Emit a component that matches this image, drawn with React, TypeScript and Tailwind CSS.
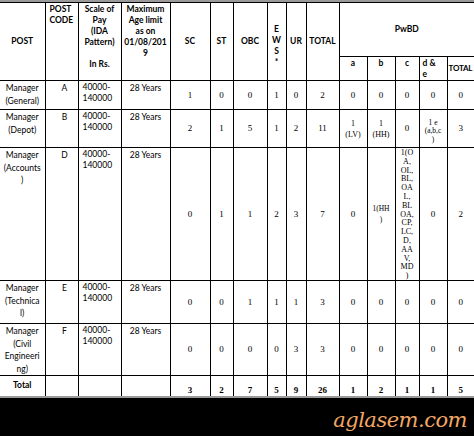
import React from 'react';

const sans = "font-['Lato','Liberation_Sans',sans-serif]";
const serif = "font-['Liberation_Serif','Times_New_Roman',serif]";

type Row = {
  post: React.ReactNode;
  code: string;
  h: string;
  nums: React.ReactNode[];
};

const rows: Row[] = [
  {
    post: <>Manager<br />(General)</>,
    code: 'A',
    h: 'h-[29px]',
    nums: ['1', '0', '0', '1', '0', '2', '0', '0', '0', '0', '0'],
  },
  {
    post: <>Manager<br />(Depot)</>,
    code: 'B',
    h: 'h-[38px]',
    nums: [
      '2', '1', '5', '1', '2', '11',
      <span className="text-[8px] leading-[10px]">1<br />(LV)</span>,
      <span className="text-[8px] leading-[10px]">1<br />(HH)</span>,
      '0',
      <span className="text-[7.5px] leading-[8.5px] block pt-[6px]">1 e<br />(a,b,c<br />)</span>,
      '3',
    ],
  },
  {
    post: <>Manager<br />(Accounts<br />)</>,
    code: 'D',
    h: 'h-[133px]',
    nums: [
      '0', '1', '1', '2', '3', '7', '0',
      <span className="text-[7.5px] leading-[10px]">1(HH<br />)</span>,
      <span className="block text-[8px] leading-[8.8px] -mb-[2px]">
        1(O<br />A,<br />OL,<br />BL,<br />OA<br />L,<br />BL<br />OA,<br />CP,<br />LC,<br />D,<br />AA<br />V,<br />MD<br />)
      </span>,
      '0',
      '2',
    ],
  },
  {
    post: <>Manager<br />(Technica<br />l)</>,
    code: 'E',
    h: 'h-[43px]',
    nums: ['0', '0', '1', '1', '1', '3', '0', '0', '0', '0', '0'],
  },
  {
    post: <>Manager<br />(Civil<br />Engineeri<br />ng)</>,
    code: 'F',
    h: 'h-[51px]',
    nums: ['0', '0', '0', '0', '3', '3', '0', '0', '0', '0', '0'],
  },
];

const totals = ['3', '2', '7', '5', '9', '26', '1', '2', '1', '1', '5'];

const widths = [45, 33, 43, 49, 40, 23, 34, 19, 20, 33, 28, 28, 24, 28, 27];

export default function App() {
  const th = `border border-black font-bold text-[8.5px] leading-[11px] text-black ${sans}`;
  const td = 'border border-black text-black';

  return (
    <div className="w-[474px] h-[436px] bg-black flex flex-col overflow-hidden">
      <div className="bg-white border-t-2 border-[#9a9a9a]">
        <table className="table-fixed border-collapse w-[474px]">
          <colgroup>
            {widths.map((w, i) => (
              <col key={i} style={{ width: w }} />
            ))}
          </colgroup>
          <thead>
            <tr className="h-[54px]">
              <th rowSpan={2} className={`${th} border-l-0 align-middle text-center`}>POST</th>
              <th rowSpan={2} className={`${th} align-top text-left pl-[4px] pt-[1px]`}>POST<br />CODE</th>
              <th rowSpan={2} className={`${th} align-top text-center pt-[1px]`}>
                Scale of<br />Pay<br />(IDA<br />Pattern)<br /><br />In Rs.
              </th>
              <th rowSpan={2} className={`${th} align-top text-center pt-[1px]`}>
                Maximum<br />Age limit<br />as on<br />01/08/201<br />9
              </th>
              <th rowSpan={2} className={`${th} align-middle text-center`}>SC</th>
              <th rowSpan={2} className={`${th} align-middle text-center`}>ST</th>
              <th rowSpan={2} className={`${th} align-middle text-center`}>OBC</th>
              <th rowSpan={2} className={`${th} align-middle text-center leading-[8.5px] pt-[8px]`}>
                E<br />W<br />S<br />*
              </th>
              <th rowSpan={2} className={`${th} align-middle text-center`}>UR</th>
              <th rowSpan={2} className={`${th} align-middle text-center`}>TOTAL</th>
              <th colSpan={5} className={`${th} border-r-0 align-middle text-center`}>PwBD</th>
            </tr>
            <tr className="h-[22px]">
              <th className={`${th} align-top text-center pt-[1px]`}>a</th>
              <th className={`${th} align-top text-center pt-[1px]`}>b</th>
              <th className={`${th} align-top text-center pt-[1px]`}>c</th>
              <th className={`${th} align-top text-left pl-[3px] pt-[1px] leading-[10px]`}>d &amp;<br />e</th>
              <th className={`${th} border-r-0 align-middle text-left pl-[1px] text-[8px] tracking-[-0.2px] whitespace-nowrap`}>TOTAL</th>
            </tr>
          </thead>
          <tbody>
            {rows.map((r) => (
              <tr key={r.code} className={r.h}>
                <td className={`${td} border-l-0 align-top text-center pt-[1px] text-[8.5px] leading-[12.5px] ${sans}`}>{r.post}</td>
                <td className={`${td} align-top text-center pl-[6px] pt-[1px] text-[8.5px] leading-[12.5px] ${sans}`}>{r.code}</td>
                <td className={`${td} align-top text-left pl-[4px] pt-[1px] text-[8.5px] leading-[11px] ${sans}`}>40000-<br />140000</td>
                <td className={`${td} align-top text-center pt-[1px] text-[8.5px] leading-[12.5px] ${sans}`}>28 Years</td>
                {r.nums.map((n, i) => (
                  <td
                    key={i}
                    className={`${td} ${i === r.nums.length - 1 ? 'border-r-0' : ''} align-middle text-center text-[9px] leading-[11px] ${serif}`}
                  >
                    {n}
                  </td>
                ))}
              </tr>
            ))}
            <tr className="h-[21px]">
              <td className={`${td} border-l-0 border-b-2 border-b-[#9a9a9a] align-middle text-center font-bold text-[8.5px] ${sans}`}>Total</td>
              <td className={`${td} border-b-2 border-b-[#9a9a9a]`}></td>
              <td className={`${td} border-b-2 border-b-[#9a9a9a]`}></td>
              <td className={`${td} border-b-2 border-b-[#9a9a9a]`}></td>
              {totals.map((t, i) => (
                <td
                  key={i}
                  className={`${td} ${i === totals.length - 1 ? 'border-r-0' : ''} border-b-2 border-b-[#9a9a9a] align-bottom text-center font-bold text-[9px] leading-[12px] ${serif}`}
                >
                  {t}
                </td>
              ))}
            </tr>
          </tbody>
        </table>
      </div>
      <div className="flex-1 flex items-end justify-end pr-[7px] pb-[3px]">
        <span className="font-['DejaVu_Serif',serif] italic text-[21px] leading-[26px] text-[#f2a766] tracking-[-0.5px]">
          aglasem.com
        </span>
      </div>
    </div>
  );
}
